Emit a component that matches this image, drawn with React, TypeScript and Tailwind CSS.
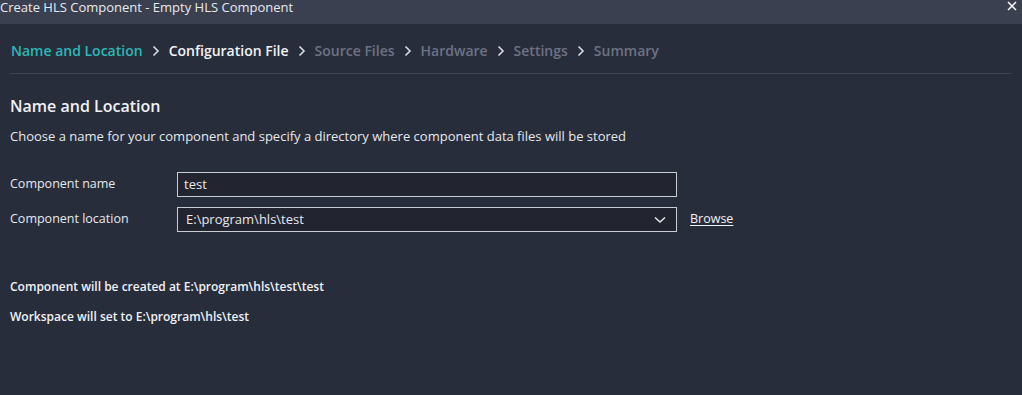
import React from 'react';

const steps = ['Name and Location', 'Configuration File', 'Source Files', 'Hardware', 'Settings', 'Summary'];

function Chevron({ className }: { className?: string }) {
    return (
        <svg width="8" height="12" viewBox="0 0 8 12" className={className}>
            <path d="M1.5 1.5 L6 6 L1.5 10.5" fill="none" stroke="currentColor" strokeWidth="1.6" />
        </svg>
    );
}

export default function App() {
    return (
        <div className="w-[1022px] h-[395px] flex flex-col bg-[#282d3b] text-[#e6e8ec] overflow-hidden" style={{ fontFamily: '"Open Sans", "Noto Sans", sans-serif' }}>
            <div className="h-6 shrink-0 bg-[#3b4051] flex items-start justify-between">
                <span className="text-[13px] leading-[15px] text-[#e8eaee]">Create HLS Component - Empty HLS Component</span>
                <svg width="10" height="10" viewBox="0 0 10 10" className="mr-[5px] mt-[1px] text-white">
                    <path d="M1 1 L9 9 M9 1 L1 9" stroke="currentColor" strokeWidth="1.5" />
                </svg>
            </div>
            <div className="mx-[10px] h-[50px] shrink-0 flex items-center gap-[9px] border-b border-[#3f4454] pt-[4px]">
                {steps.map((s, i) => (
                    <React.Fragment key={s}>
                        {i > 0 && <Chevron className="text-[#d8dce4]" />}
                        <span
                            className={
                                'text-[14px] font-semibold ' +
                                (i === 0 ? 'text-[#2bb8b8] ml-[1px]' : i === 1 ? 'text-[#f2f3f5]' : 'text-[#6d7384]')
                            }
                        >
                            {s}
                        </span>
                    </React.Fragment>
                ))}
            </div>
            <div className="px-[10px] pt-[21px]">
                <h2 className="text-[16px] font-semibold leading-[22px] text-[#f0f1f4]">Name and Location</h2>
                <p className="mt-[10px] text-[13px] leading-[18px] text-[#e6e8ec]">
                    Choose a name for your component and specify a directory where component data files will be stored
                </p>
                <div className="mt-[27px] flex flex-col gap-[10px]">
                    <div className="flex items-center">
                        <span className="w-[167px] text-[12.5px]">Component name</span>
                        <div className="w-[500px] h-[25px] border border-[#c9ccd3] bg-[#222530] flex items-center px-[6px] text-[13px]">test</div>
                    </div>
                    <div className="flex items-center">
                        <span className="w-[167px] text-[12.5px]">Component location</span>
                        <div className="w-[500px] h-[25px] border border-[#c9ccd3] bg-[#222530] flex items-center justify-between pl-[8px] pr-[10px] text-[13px]">
                            <span>E:\program\hls\test</span>
                            <svg width="12" height="8" viewBox="0 0 12 8" className="text-[#e6e8ec]">
                                <path d="M1 1.5 L6 6 L11 1.5" fill="none" stroke="currentColor" strokeWidth="1.5" />
                            </svg>
                        </div>
                        <span className="ml-[13px] text-[12.5px] underline underline-offset-2 text-[#f0f1f4]">Browse</span>
                    </div>
                </div>
                <p className="mt-[46px] text-[12px] font-semibold text-[#f0f1f4]">Component will be created at E:\program\hls\test\test</p>
                <p className="mt-[12px] text-[12px] font-semibold text-[#f0f1f4]">Workspace will set to E:\program\hls\test</p>
            </div>
        </div>
    );
}
